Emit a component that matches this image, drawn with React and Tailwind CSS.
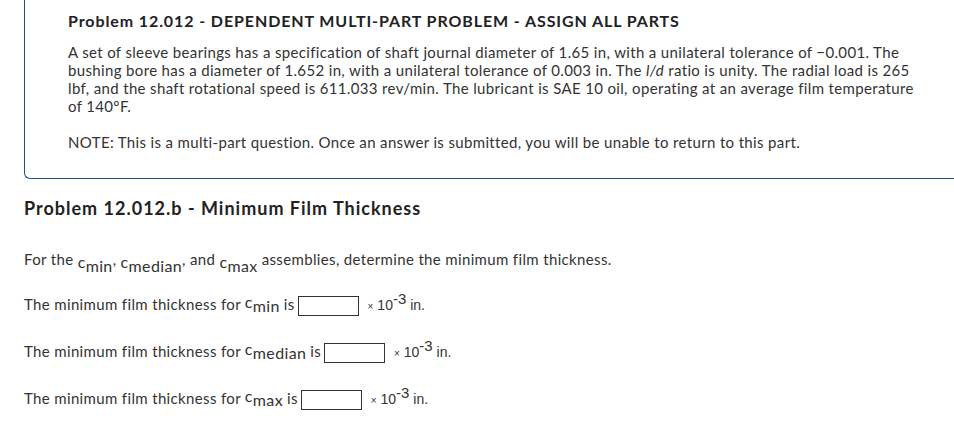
const Cvar = ({ sub }) => (
  <span className="align-[-3px] text-[16px] leading-none">
    c<span className="align-[-4px]">{sub}</span>
  </span>
);

const AnswerRow = ({ sub }) => (
  <div className="flex items-center leading-[20px]">
    <span>The minimum film thickness for&nbsp;</span>
    <Cvar sub={sub} />
    <span className="ml-[4px]">is</span>
    <input
      type="text"
      className="ml-[3px] mt-[4px] w-[61px] h-[20px] border border-[#333] bg-white outline-none"
    />
    <span className="ml-[9px] font-['Liberation_Sans',sans-serif] text-[14px] tracking-normal leading-[20px]">
      <span className="text-[10px]">×</span> 10<span className="text-[15px] align-[6px] leading-none">-3</span> in.
    </span>
  </div>
);

export default function App() {
  return (
    <div className="w-[954px] h-[448px] overflow-hidden bg-white font-['Lato',sans-serif] text-[#333] tracking-[0.35px]">
      <div className="ml-6 w-[960px] border-l border-b border-[#1f4f8a] rounded-bl-[6px] pl-[43px] pt-[11px] pb-[27px]">
        <h1 className="text-[16px] font-bold text-[#222] leading-[20px] tracking-[0.9px]">
          Problem 12.012 - DEPENDENT MULTI-PART PROBLEM - ASSIGN ALL PARTS
        </h1>
        <p className="mt-[12px] text-[15px] leading-[18px]">
          A set of sleeve bearings has a specification of shaft journal diameter of 1.65 in, with a unilateral
          tolerance of −0.001. The<br />bushing bore has a diameter of 1.652 in, with a unilateral tolerance of 0.003 in.
          The <i>l/d</i> ratio is unity. The radial load is 265<br />lbf, and the shaft rotational speed is 611.033
          rev/min. The lubricant is SAE 10 oil, operating at an average film temperature<br />of 140°F.
        </p>
        <p className="mt-[18px] text-[15px] leading-[18px]">
          NOTE: This is a multi-part question. Once an answer is submitted, you will be unable to return to this part.
        </p>
      </div>

      <div className="px-6 pt-[17px] flex flex-col text-[15px]">
        <h2 className="text-[18px] font-bold text-[#222] leading-[24px] tracking-[1px]">
          Problem 12.012.b - Minimum Film Thickness
        </h2>
        <p className="mt-[29px] leading-[20px]">
          For the <Cvar sub="min" />, <Cvar sub="median" />, and <Cvar sub="max" /> assemblies, determine the
          minimum film thickness.
        </p>
        <div className="mt-[17px] flex flex-col gap-[21px]">
          <AnswerRow sub="min" />
          <AnswerRow sub="median" />
          <AnswerRow sub="max" />
        </div>
      </div>
    </div>
  );
}
